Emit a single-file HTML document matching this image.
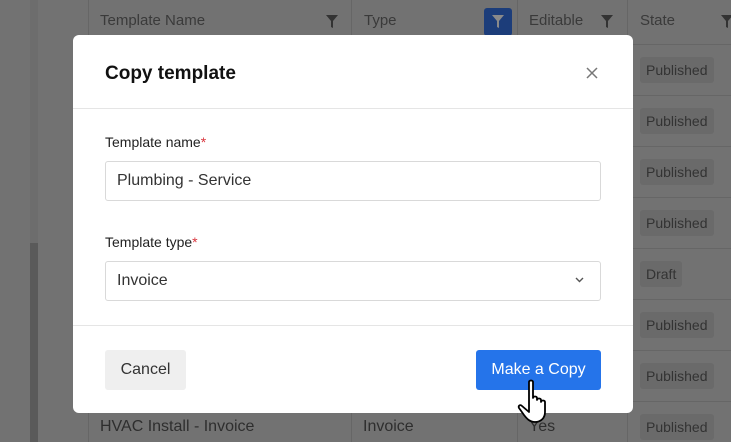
<!DOCTYPE html>
<html><head><meta charset="utf-8"><style>
*{box-sizing:border-box;margin:0;padding:0}
body{width:731px;height:442px;overflow:hidden;background:#727272;font-family:"Liberation Sans",sans-serif;position:relative}
.abs{position:absolute}
.hd{color:#3a3a3a;font-size:15px}
.vl{position:absolute;top:0;width:1px;height:442px;background:#666}
.hl{position:absolute;left:88px;width:643px;height:1px;background:#666}
.badge{position:absolute;left:640px;height:26px;padding:0 6px;background:#6a6a6a;color:#333;font-size:14px;line-height:26px;border-radius:3px}
.cell{position:absolute;color:#2e2e2e;font-size:16px}
.modal{position:absolute;left:73px;top:35px;width:560px;height:378px;background:#fff;border-radius:6px}
.lbl{position:absolute;left:32px;font-size:14px;color:#222}
.lbl span{color:#d9363e}
.inp{position:absolute;left:32px;width:496px;height:40px;border:1px solid #d9d9d9;border-radius:3px;font-size:16px;color:#333;padding-left:11px;line-height:38px}
</style></head><body>
<div class="abs" style="left:30px;top:0;width:8px;height:243px;background:#6d6d6d"></div>
<div class="abs" style="left:30px;top:243px;width:8px;height:199px;background:#5a5a5a"></div>
<div class="vl" style="left:88px"></div><div class="vl" style="left:351px"></div><div class="vl" style="left:517px"></div><div class="vl" style="left:627px"></div>
<div class="hl" style="top:44px"></div>
<div class="hl" style="top:95px"></div><div class="hl" style="top:146px"></div><div class="hl" style="top:197px"></div><div class="hl" style="top:248px"></div><div class="hl" style="top:299px"></div><div class="hl" style="top:350px"></div><div class="hl" style="top:401px"></div>
<div class="abs hd" style="left:100px;top:12px">Template Name</div>
<div class="abs hd" style="left:364px;top:12px">Type</div>
<div class="abs hd" style="left:529px;top:12px">Editable</div>
<div class="abs hd" style="left:640px;top:12px">State</div>
<svg class="abs" style="left:326px;top:15px" width="12" height="13" viewBox="0 0 12 13"><path d="M0 0H12L7 6V13L5 12V6Z" fill="#333"/></svg>
<div class="abs" style="left:484px;top:8px;width:28px;height:28px;background:#1c3d7a;border-radius:3px"></div>
<svg class="abs" style="left:492px;top:15px" width="12" height="13" viewBox="0 0 12 13"><path d="M0 0H12L7 6V13L5 12V6Z" fill="#8a8a8a"/></svg>
<svg class="abs" style="left:601px;top:15px" width="12" height="13" viewBox="0 0 12 13"><path d="M0 0H12L7 6V13L5 12V6Z" fill="#333"/></svg>
<svg class="abs" style="left:721px;top:15px" width="12" height="13" viewBox="0 0 12 13"><path d="M0 0H12L7 6V13L5 12V6Z" fill="#333"/></svg>
<div class="badge" style="top:57px">Published</div>
<div class="badge" style="top:108px">Published</div>
<div class="badge" style="top:159px">Published</div>
<div class="badge" style="top:210px">Published</div>
<div class="badge" style="top:261px">Draft</div>
<div class="badge" style="top:312px">Published</div>
<div class="badge" style="top:363px">Published</div>
<div class="badge" style="top:414px">Published</div>
<div class="cell" style="left:100px;top:418px">HVAC Install - Invoice</div>
<div class="cell" style="left:363px;top:418px">Invoice</div>
<div class="cell" style="left:529px;top:418px">Yes</div>
<div class="modal">
  <div class="abs" style="left:32px;top:28px;font-size:19px;font-weight:bold;color:#111">Copy template</div>
  <svg class="abs" style="left:513px;top:32px" width="12" height="12" viewBox="0 0 12 12"><path d="M1 1L11 11M11 1L1 11" stroke="#777" stroke-width="1.5"/></svg>
  <div class="abs" style="left:0;top:73px;width:560px;height:1px;background:#e5e5e5"></div>
  <div class="lbl" style="top:99px">Template name<span>*</span></div>
  <div class="inp" style="top:126px">Plumbing - Service</div>
  <div class="lbl" style="top:199px">Template type<span>*</span></div>
  <div class="inp" style="top:226px">Invoice</div>
  <svg class="abs" style="left:502px;top:242px" width="9" height="6" viewBox="0 0 9 6"><path d="M1 1L4.5 4.5L8 1" stroke="#555" stroke-width="1.4" fill="none"/></svg>
  <div class="abs" style="left:0;top:290px;width:560px;height:1px;background:#e5e5e5"></div>
  <div class="abs" style="left:32px;top:315px;width:81px;height:40px;background:#efefef;border-radius:3px;font-size:16px;color:#333;text-align:center;line-height:40px">Cancel</div>
  <div class="abs" style="left:403px;top:315px;width:125px;height:40px;background:#2574ea;border-radius:3px;font-size:16px;color:#fff;text-align:center;line-height:40px">Make a Copy</div>
</div>
<svg class="abs" style="left:516px;top:378px" width="40" height="50" viewBox="0 0 40 50"><path d="M13 4C13 2 17 2 17 4V20C17 18 21 18 21 20V22C21 20 25 20 25 22V24C25 22 29 22 29 24V34C29 40 25 44 19 44C14 44 11 41 8 37L3 30C2 28 4 26 6 28L13 34Z" fill="#fff" stroke="#000" stroke-width="1.8" stroke-linejoin="round"/></svg>
</body></html>
